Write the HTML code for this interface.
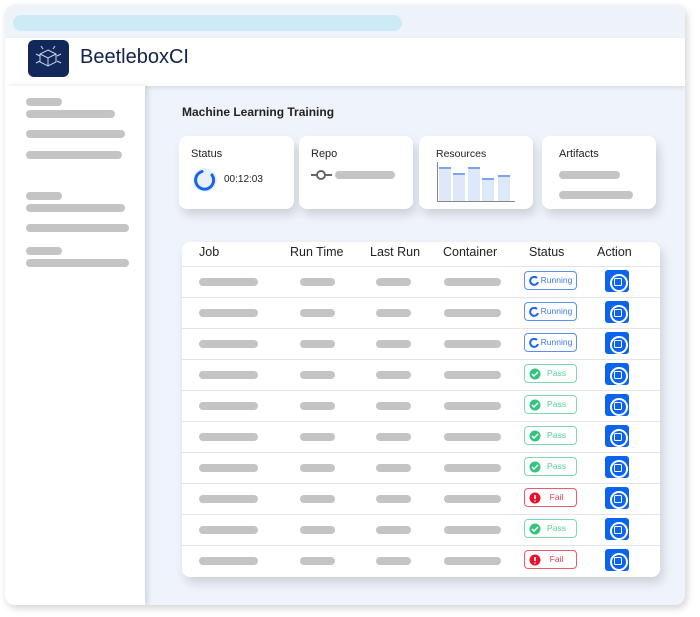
<!DOCTYPE html>
<html><head><style>
*{margin:0;padding:0;box-sizing:border-box}
body{width:700px;height:617px;background:#fff;font-family:"Liberation Sans",sans-serif;position:relative;overflow:hidden}
.a{position:absolute}
.bar{position:absolute;height:8px;border-radius:4px;background:#c4c4c4}
.card{position:absolute;background:#fff;border-radius:8px;box-shadow:3px 6px 10px rgba(0,0,0,.14)}
.t{position:absolute;font-size:11px;color:#222}
.th{position:absolute;font-size:12.5px;color:#222;top:245px}
.row{position:absolute;left:182px;width:478px;height:31px;border-top:1.5px solid #e2e4e8}
.badge{position:absolute;left:342px;top:4px;width:53px;height:19px;border:1.3px solid;border-radius:4px;font-size:8.5px;line-height:17px;text-align:center;padding-left:12px}
.btn{position:absolute;left:423px;top:3px;width:24px;height:22px;background:#0a64f0;border-radius:3px}
.btn:after{content:"";position:absolute;left:5px;top:4px;width:14px;height:14px;border:2px solid #fff;border-radius:50%}
.btn:before{content:"";position:absolute;left:9px;top:8px;width:6px;height:6px;border:1.5px solid #fff;border-radius:1.5px}
</style></head><body>
<div class="a" style="left:5px;top:5px;width:680px;height:600px;background:#eff3fb;border-radius:10px;box-shadow:2px 3px 8px rgba(0,0,0,.18);overflow:hidden">
 <div class="a" style="left:0;top:0;width:680px;height:33px;background:#eef3fa"></div>
 <div class="a" style="left:8px;top:10px;width:389px;height:16px;background:#cfeaf7;border-radius:8px"></div>
 <div class="a" style="left:0;top:33px;width:680px;height:48px;background:#fff;box-shadow:0 2px 4px rgba(0,0,0,.1)"></div>
 <div class="a" style="left:0;top:81px;width:140px;height:519px;background:#fff;box-shadow:3px 0 5px rgba(0,0,0,.12)"></div>
</div>
<div class="a" style="left:28px;top:40px;width:41px;height:37px;background:#12285a;border-radius:6px">
<svg width="41" height="37" viewBox="0 0 41 37" fill="none" stroke="#cfd8ea" stroke-width="1"><path d="M20 10l8 4v8l-8 4-8-4v-8z M12 14l8 4 8-4 M20 18v8 M15 9l-2-3 M25 9l2-3 M12 16l-4-2 M29 16l4-2 M12 21l-4 2 M29 21l4 2"/></svg></div>
<div class="a" style="left:80px;top:46px;font-size:20px;color:#12224a">BeetleboxCI</div>
<div class="bar" style="left:26px;top:98px;width:36px"></div>
<div class="bar" style="left:26px;top:110px;width:89px"></div>
<div class="bar" style="left:26px;top:130px;width:99px"></div>
<div class="bar" style="left:26px;top:151px;width:96px"></div>
<div class="bar" style="left:26px;top:192px;width:36px"></div>
<div class="bar" style="left:26px;top:204px;width:99px"></div>
<div class="bar" style="left:26px;top:224px;width:103px"></div>
<div class="bar" style="left:26px;top:247px;width:36px"></div>
<div class="bar" style="left:26px;top:259px;width:103px"></div>
<div class="a" style="left:182px;top:105px;font-size:12px;font-weight:bold;color:#222">Machine Learning Training</div>
<div class="card" style="left:179px;top:136px;width:115px;height:73px"></div>
<div class="card" style="left:299px;top:136px;width:114px;height:73px"></div>
<div class="card" style="left:419px;top:136px;width:114px;height:73px"></div>
<div class="card" style="left:542px;top:136px;width:114px;height:73px"></div>
<div class="t" style="left:191px;top:148px">Status</div>
<svg class="a" style="left:192px;top:167px" width="26" height="26"><circle cx="13" cy="13" r="12" fill="#eaf0fb"/><path d="M20 8 A9 9 0 1 1 10 4.5" stroke="#1565f0" stroke-width="3" fill="none" stroke-linecap="round"/></svg>
<div class="t" style="left:224px;top:174px;font-size:10px">00:12:03</div>
<div class="t" style="left:311px;top:148px">Repo</div>
<svg class="a" style="left:311px;top:169px" width="25" height="12"><path d="M0 6h21" stroke="#666" stroke-width="2"/><circle cx="10" cy="6" r="4" fill="#fff" stroke="#666" stroke-width="2"/></svg>
<div class="bar" style="left:335px;top:171px;width:60px"></div>
<div class="t" style="left:436px;top:148px;font-size:10.5px">Resources</div>
<div class="a" style="left:437px;top:162px;width:1px;height:40px;background:#888"></div>
<div class="a" style="left:437px;top:201px;width:78px;height:1px;background:#888"></div>
<div class="a" style="left:439px;top:167px;width:12px;height:34px;background:#dde8fb;border-top:2px solid #7aa6f0"></div>
<div class="a" style="left:453px;top:173px;width:12px;height:28px;background:#dde8fb;border-top:2px solid #7aa6f0"></div>
<div class="a" style="left:468px;top:167px;width:12px;height:34px;background:#dde8fb;border-top:2px solid #7aa6f0"></div>
<div class="a" style="left:482px;top:178px;width:12px;height:23px;background:#dde8fb;border-top:2px solid #7aa6f0"></div>
<div class="a" style="left:498px;top:175px;width:12px;height:26px;background:#dde8fb;border-top:2px solid #7aa6f0"></div>
<div class="t" style="left:559px;top:148px">Artifacts</div>
<div class="bar" style="left:559px;top:171px;width:61px"></div>
<div class="bar" style="left:559px;top:191px;width:74px"></div>
<div class="card" style="left:182px;top:242px;width:478px;height:335px"></div>
<div class="th" style="left:199px">Job</div>
<div class="th" style="left:290px">Run Time</div>
<div class="th" style="left:370px">Last Run</div>
<div class="th" style="left:443px">Container</div>
<div class="th" style="left:529px">Status</div>
<div class="th" style="left:597px">Action</div>
<div id="rows"></div>
<script>
var s="RRRPPPPFPF",h="";
for(var i=0;i<10;i++){var y=266+i*31,c=s[i],b;
if(c=="R")b='<div class="badge" style="border-color:#5b8ff0;color:#3d7ae8"><svg style="position:absolute;left:4px;top:4px" width="10" height="10"><path d="M8 2A4 4 0 1 0 9 6" stroke="#1a66e8" stroke-width="2" fill="none"/></svg>Running</div>';
else if(c=="P")b='<div class="badge" style="border-color:#7ddab0;color:#4fd097"><svg style="position:absolute;left:4px;top:3px" width="12" height="12"><circle cx="6" cy="6" r="5.5" fill="#35c47e"/><path d="M3 6l2 2 4-4" stroke="#fff" stroke-width="1.5" fill="none"/></svg>Pass</div>';
else b='<div class="badge" style="border-color:#ef5a6a;color:#e83a4d"><svg style="position:absolute;left:4px;top:3px" width="12" height="12"><circle cx="6" cy="6" r="5.5" fill="#e8102a"/><path d="M6 3v4M6 8.5v1" stroke="#fff" stroke-width="1.6"/></svg>Fail</div>';
h+='<div class="row" style="top:'+y+'px"><div class="bar" style="left:17px;top:11px;width:59px"></div><div class="bar" style="left:118px;top:11px;width:35px"></div><div class="bar" style="left:194px;top:11px;width:35px"></div><div class="bar" style="left:262px;top:11px;width:57px"></div>'+b+'<div class="btn"></div></div>';}
document.getElementById("rows").innerHTML=h;
</script>
</body></html>
